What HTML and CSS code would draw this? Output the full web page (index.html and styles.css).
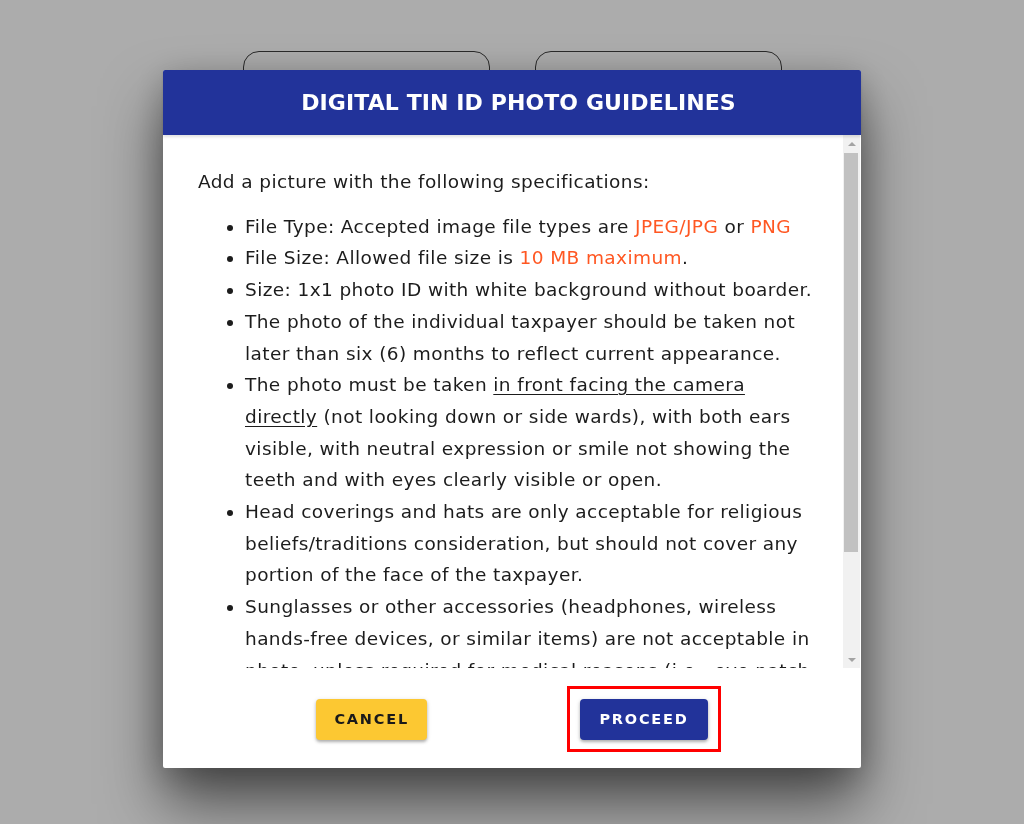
FILE: index.html
```html
<!DOCTYPE html>
<html lang="en">
<head>
<meta charset="utf-8">
<title>Digital TIN ID Photo Guidelines</title>
<link rel="stylesheet" href="styles.css">
</head>
<body>
  <div class="page">
    <div class="choice-row">
      <div class="choice-btn"></div>
      <div class="choice-btn"></div>
    </div>
  </div>

  <div class="overlay">
    <div class="modal" role="dialog" aria-labelledby="modal-title">
      <div class="modal-header">
        <h2 id="modal-title" class="modal-title">DIGITAL TIN ID PHOTO GUIDELINES</h2>
      </div>
      <div class="modal-body">
        <div class="scroll-content">
          <p class="intro">Add a picture with the following specifications:</p>
          <ul class="spec-list">
            <li>File Type: Accepted image file types are <span class="hl">JPEG/JPG</span> or <span class="hl">PNG</span></li>
            <li>File Size: Allowed file size is <span class="hl">10 MB maximum</span>.</li>
            <li>Size: 1x1 photo ID with white background without boarder.</li>
            <li>The photo of the individual taxpayer should be taken not<br>later than six (6) months to reflect current appearance.</li>
            <li>The photo must be taken <u>in front facing the camera<br>directly</u> (not looking down or side wards), with both ears<br>visible, with neutral expression or smile not showing the<br>teeth and with eyes clearly visible or open.</li>
            <li>Head coverings and hats are only acceptable for religious<br>beliefs/traditions consideration, but should not cover any<br>portion of the face of the taxpayer.</li>
            <li>Sunglasses or other accessories (headphones, wireless<br>hands-free devices, or similar items) are not acceptable in<br>photo, unless required for medical reasons (i.e., eye patch<br>for eye injury, hearing aid for hearing impaired).</li>
          </ul>
        </div>
        <div class="scrollbar" aria-hidden="true">
          <div class="sb-btn"><span class="sb-arrow-up"></span></div>
          <div class="sb-track"><div class="sb-thumb"></div></div>
          <div class="sb-btn"><span class="sb-arrow-down"></span></div>
        </div>
      </div>
      <div class="modal-footer">
        <button class="btn btn-cancel" type="button">CANCEL</button>
        <button class="btn btn-proceed" type="button">PROCEED</button>
      </div>
    </div>
  </div>
</body>
</html>
```

FILE: styles.css
```css
* { box-sizing: border-box; }

html, body {
  margin: 0;
  padding: 0;
  height: 824px;
  overflow: hidden;
}

body {
  background: #acacac;
  font-family: "DejaVu Sans", "Noto Sans", sans-serif;
  color: #1c1c1c;
}

.page {
  padding-top: 51px;
}

.choice-row {
  display: flex;
  justify-content: center;
  gap: 45px;
}

.choice-btn {
  width: 247px;
  height: 60px;
  border: 1px solid #2a2a2a;
  border-radius: 16px;
}

.overlay {
  position: fixed;
  inset: 0;
  display: flex;
  justify-content: center;
  align-items: flex-start;
  padding-top: 70px;
}

.modal {
  width: 698px;
  height: 698px;
  background: #ffffff;
  border-radius: 2px;
  display: flex;
  flex-direction: column;
  box-shadow: 0 36px 60px rgba(0, 0, 0, 0.55), 0 6px 32px rgba(0, 0, 0, 0.22);
}

.modal-header {
  height: 65px;
  flex: none;
  background: #22339a;
  display: flex;
  align-items: center;
  justify-content: center;
  padding-left: 13px;
  border-radius: 2px 2px 0 0;
  box-shadow: 0 2px 3px rgba(0, 0, 0, 0.12);
  position: relative;
  z-index: 1;
}

.modal-title {
  margin: 0;
  color: #ffffff;
  font-size: 22px;
  font-weight: bold;
  letter-spacing: 0.1px;
}

.modal-body {
  height: 533px;
  flex: none;
  display: flex;
  padding-right: 1px;
}

.scroll-content {
  flex: 1;
  overflow: hidden;
  padding: 31px 0 0 35px;
  font-size: 18.5px;
  letter-spacing: 0.4px;
  line-height: 31.7px;
}

.scrollbar {
  width: 17px;
  flex: none;
  display: flex;
  flex-direction: column;
  background: #f1f1f1;
}

.sb-btn {
  height: 17px;
  flex: none;
  display: flex;
  align-items: center;
  justify-content: center;
}

.sb-arrow-up {
  width: 0;
  height: 0;
  border-left: 4px solid transparent;
  border-right: 4px solid transparent;
  border-bottom: 4px solid #a3a3a3;
}

.sb-arrow-down {
  width: 0;
  height: 0;
  border-left: 4px solid transparent;
  border-right: 4px solid transparent;
  border-top: 4px solid #a3a3a3;
}

.sb-track {
  flex: 1;
  padding: 1px 2px 0 1px;
}

.sb-thumb {
  height: 399px;
  background: #c1c1c1;
}

.intro {
  margin: 0 0 13px;
}

.spec-list {
  margin: 0;
  padding-left: 47px;
}

.spec-list li {
  white-space: nowrap;
}

.hl {
  color: #ff5722;
}

.scroll-content u {
  text-underline-offset: 3px;
}

.modal-footer {
  flex: 1;
  display: flex;
  align-items: center;
  justify-content: space-evenly;
  padding-top: 2px;
}

.btn {
  height: 41px;
  padding: 0 18px;
  border: 0;
  border-radius: 4px;
  font-family: "DejaVu Sans", "Noto Sans", sans-serif;
  font-size: 14.5px;
  font-weight: bold;
  letter-spacing: 1.8px;
  cursor: pointer;
  box-shadow: 0 2px 3px rgba(0, 0, 0, 0.25), 0 1px 5px rgba(0, 0, 0, 0.12);
}

.btn-cancel {
  background: #fcc832;
  color: #1a1a1a;
}

.btn-proceed {
  position: relative;
  padding: 0 19px;
  background: #22339a;
  color: #ffffff;
}

.btn-proceed::after {
  content: "";
  position: absolute;
  inset: -13px -13px -12px -13px;
  border: 3px solid #ff0000;
  pointer-events: none;
}
```
